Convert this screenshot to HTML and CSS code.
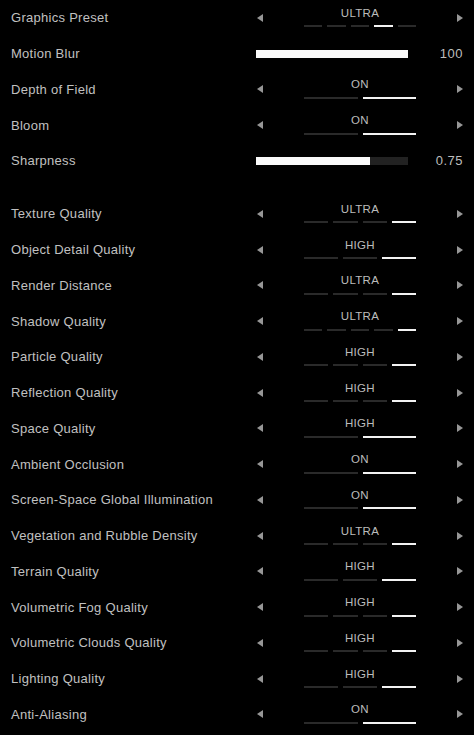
FILE: index.html
```html
<!DOCTYPE html>
<html lang="en">
<head>
<meta charset="utf-8">
<title>Graphics Settings</title>
<link rel="stylesheet" href="styles.css">
</head>
<body>
<main class="settings">
  <section class="group">
    <div class="row">
      <span class="label">Graphics Preset</span>
      <div class="selector">
        <span class="arrow left"></span>
        <div class="choice"><span class="value">ULTRA</span><div class="segs"><i></i><i></i><i></i><i class="on"></i><i></i></div></div>
        <span class="arrow right"></span>
      </div>
    </div>
    <div class="row">
      <span class="label">Motion Blur</span>
      <div class="slider">
        <div class="track"><div class="fill" style="width:100%"></div></div>
        <span class="num">100</span>
      </div>
    </div>
    <div class="row">
      <span class="label">Depth of Field</span>
      <div class="selector">
        <span class="arrow left"></span>
        <div class="choice"><span class="value">ON</span><div class="segs"><i></i><i class="on"></i></div></div>
        <span class="arrow right"></span>
      </div>
    </div>
    <div class="row">
      <span class="label">Bloom</span>
      <div class="selector">
        <span class="arrow left"></span>
        <div class="choice"><span class="value">ON</span><div class="segs"><i></i><i class="on"></i></div></div>
        <span class="arrow right"></span>
      </div>
    </div>
    <div class="row">
      <span class="label">Sharpness</span>
      <div class="slider">
        <div class="track"><div class="fill" style="width:75%"></div></div>
        <span class="num">0.75</span>
      </div>
    </div>
  </section>

  <section class="group second">
    <div class="row">
      <span class="label">Texture Quality</span>
      <div class="selector">
        <span class="arrow left"></span>
        <div class="choice"><span class="value">ULTRA</span><div class="segs"><i></i><i></i><i></i><i class="on"></i></div></div>
        <span class="arrow right"></span>
      </div>
    </div>
    <div class="row">
      <span class="label">Object Detail Quality</span>
      <div class="selector">
        <span class="arrow left"></span>
        <div class="choice"><span class="value">HIGH</span><div class="segs"><i></i><i></i><i class="on"></i></div></div>
        <span class="arrow right"></span>
      </div>
    </div>
    <div class="row">
      <span class="label">Render Distance</span>
      <div class="selector">
        <span class="arrow left"></span>
        <div class="choice"><span class="value">ULTRA</span><div class="segs"><i></i><i></i><i></i><i class="on"></i></div></div>
        <span class="arrow right"></span>
      </div>
    </div>
    <div class="row">
      <span class="label">Shadow Quality</span>
      <div class="selector">
        <span class="arrow left"></span>
        <div class="choice"><span class="value">ULTRA</span><div class="segs"><i></i><i></i><i></i><i></i><i class="on"></i></div></div>
        <span class="arrow right"></span>
      </div>
    </div>
    <div class="row">
      <span class="label">Particle Quality</span>
      <div class="selector">
        <span class="arrow left"></span>
        <div class="choice"><span class="value">HIGH</span><div class="segs"><i></i><i></i><i></i><i class="on"></i></div></div>
        <span class="arrow right"></span>
      </div>
    </div>
    <div class="row">
      <span class="label">Reflection Quality</span>
      <div class="selector">
        <span class="arrow left"></span>
        <div class="choice"><span class="value">HIGH</span><div class="segs"><i></i><i></i><i></i><i class="on"></i></div></div>
        <span class="arrow right"></span>
      </div>
    </div>
    <div class="row">
      <span class="label">Space Quality</span>
      <div class="selector">
        <span class="arrow left"></span>
        <div class="choice"><span class="value">HIGH</span><div class="segs"><i></i><i class="on"></i></div></div>
        <span class="arrow right"></span>
      </div>
    </div>
    <div class="row">
      <span class="label">Ambient Occlusion</span>
      <div class="selector">
        <span class="arrow left"></span>
        <div class="choice"><span class="value">ON</span><div class="segs"><i></i><i class="on"></i></div></div>
        <span class="arrow right"></span>
      </div>
    </div>
    <div class="row">
      <span class="label">Screen-Space Global Illumination</span>
      <div class="selector">
        <span class="arrow left"></span>
        <div class="choice"><span class="value">ON</span><div class="segs"><i></i><i class="on"></i></div></div>
        <span class="arrow right"></span>
      </div>
    </div>
    <div class="row">
      <span class="label">Vegetation and Rubble Density</span>
      <div class="selector">
        <span class="arrow left"></span>
        <div class="choice"><span class="value">ULTRA</span><div class="segs"><i></i><i></i><i></i><i class="on"></i></div></div>
        <span class="arrow right"></span>
      </div>
    </div>
    <div class="row">
      <span class="label">Terrain Quality</span>
      <div class="selector">
        <span class="arrow left"></span>
        <div class="choice"><span class="value">HIGH</span><div class="segs"><i></i><i></i><i class="on"></i></div></div>
        <span class="arrow right"></span>
      </div>
    </div>
    <div class="row">
      <span class="label">Volumetric Fog Quality</span>
      <div class="selector">
        <span class="arrow left"></span>
        <div class="choice"><span class="value">HIGH</span><div class="segs"><i></i><i></i><i></i><i class="on"></i></div></div>
        <span class="arrow right"></span>
      </div>
    </div>
    <div class="row">
      <span class="label">Volumetric Clouds Quality</span>
      <div class="selector">
        <span class="arrow left"></span>
        <div class="choice"><span class="value">HIGH</span><div class="segs"><i></i><i></i><i></i><i class="on"></i></div></div>
        <span class="arrow right"></span>
      </div>
    </div>
    <div class="row">
      <span class="label">Lighting Quality</span>
      <div class="selector">
        <span class="arrow left"></span>
        <div class="choice"><span class="value">HIGH</span><div class="segs"><i></i><i></i><i class="on"></i></div></div>
        <span class="arrow right"></span>
      </div>
    </div>
    <div class="row">
      <span class="label">Anti-Aliasing</span>
      <div class="selector">
        <span class="arrow left"></span>
        <div class="choice"><span class="value">ON</span><div class="segs"><i></i><i class="on"></i></div></div>
        <span class="arrow right"></span>
      </div>
    </div>
  </section>
</main>
</body>
</html>
```

FILE: styles.css
```css
html, body {
  margin: 0;
  padding: 0;
  background: #000;
}

body {
  font-family: "Liberation Sans", Arial, sans-serif;
  color: #c2c2c2;
}

.settings {
  padding: 0 11px 0 11px;
  display: flex;
  flex-direction: column;
}

.group {
  display: flex;
  flex-direction: column;
}

.group.second {
  margin-top: 17.25px;
}

.row {
  height: 35.75px;
  display: flex;
  align-items: center;
}

.label {
  flex: 1;
  font-size: 13px;
  letter-spacing: 0.28px;
  color: #c0c0c0;
  line-height: 16px;
  padding-top: 1px;
}

.selector {
  width: 206px;
  height: 100%;
  display: grid;
  grid-template-columns: 6px 1fr 6px;
  align-items: center;
  margin-left: 1px;
}

.arrow {
  width: 0;
  height: 0;
  border-top: 4.5px solid transparent;
  border-bottom: 4.5px solid transparent;
}

.arrow.left {
  border-right: 6px solid #979797;
}

.arrow.right {
  border-left: 6px solid #979797;
}

.choice {
  display: flex;
  flex-direction: column;
  align-items: center;
  padding-bottom: 1.5px;
}

.value {
  font-size: 11.5px;
  line-height: 12px;
  letter-spacing: 0.3px;
  color: #bcbcbc;
}

.segs {
  margin-top: 6.5px;
  width: 112px;
  height: 2px;
  display: flex;
  gap: 5px;
}

.segs i {
  flex: 1;
  background: #2a2a2a;
}

.segs i.on {
  background: #f2f2f2;
}

.slider {
  width: 207px;
  display: flex;
  align-items: center;
}

.track {
  width: 152px;
  height: 8px;
  background: #222;
}

.fill {
  height: 100%;
  background: #fafafa;
}

.num {
  flex: 1;
  text-align: right;
  font-size: 13px;
  letter-spacing: 0.5px;
  color: #bdbdbd;
}
```
